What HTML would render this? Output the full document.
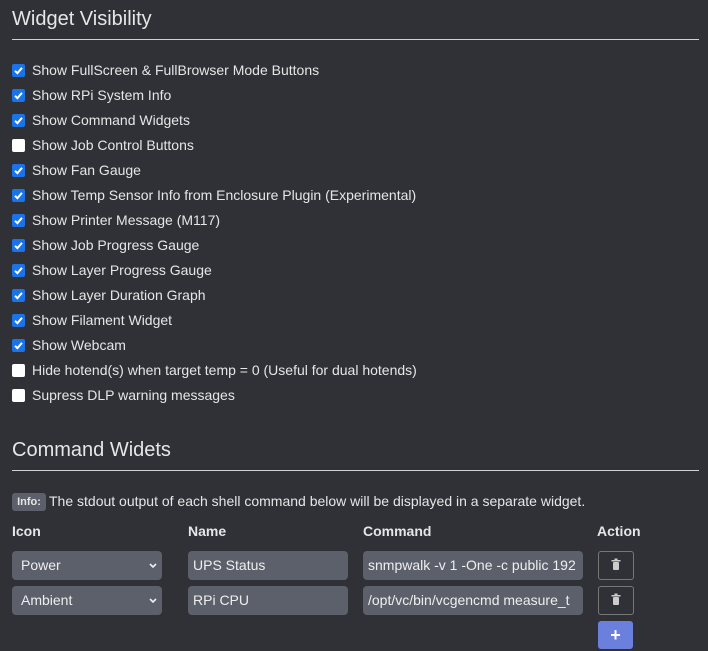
<!DOCTYPE html>
<html><head><style>
body{margin:0;background:#2f3136;color:#e6e6e6;font-family:"Liberation Sans",sans-serif;width:708px;height:651px;overflow:hidden;position:relative}
.a{position:absolute}
h2{position:absolute;margin:0;font-weight:normal;font-size:20px;left:12px;color:#e6e6e6}
.rule{position:absolute;left:12px;width:687px;height:1px;background:#d0d0d0}
.cb{position:absolute;left:12px;width:13px;height:13px;border-radius:2px}
.on{background:#1a73e8}
.off{background:#fff}
.lb{position:absolute;left:32px;font-size:14px;line-height:16px}
.in{position:absolute;height:29px;background:#5b606b;border-radius:4px;font-size:14px;line-height:29px;padding-left:9px;box-sizing:border-box;overflow:hidden;white-space:nowrap;color:#eee}
.th{position:absolute;top:523px;font-size:14px;font-weight:bold}
.btn{position:absolute;left:598px;width:36px;height:29px;border:1px solid #777;border-radius:3px;box-sizing:border-box}
.chev{position:absolute;right:4px;top:11px}
</style></head><body>
<svg width="0" height="0" style="position:absolute"><defs><symbol id="ck" viewBox="0 0 13 13"><path d="M3 6.8 L5.4 9.2 L10 3.8" stroke="#fff" stroke-width="2" fill="none"/></symbol></defs></svg>
<h2 style="top:8px">Widget Visibility</h2>
<div class="rule" style="top:39px"></div>
<svg class="cb on" style="top:64px"><use href="#ck"/></svg><div class="lb" style="top:62px">Show FullScreen &amp; FullBrowser Mode Buttons</div>
<svg class="cb on" style="top:89px"><use href="#ck"/></svg><div class="lb" style="top:87px">Show RPi System Info</div>
<svg class="cb on" style="top:114px"><use href="#ck"/></svg><div class="lb" style="top:112px">Show Command Widgets</div>
<div class="cb off" style="top:139px"></div><div class="lb" style="top:137px">Show Job Control Buttons</div>
<svg class="cb on" style="top:164px"><use href="#ck"/></svg><div class="lb" style="top:162px">Show Fan Gauge</div>
<svg class="cb on" style="top:189px"><use href="#ck"/></svg><div class="lb" style="top:187px">Show Temp Sensor Info from Enclosure Plugin (Experimental)</div>
<svg class="cb on" style="top:214px"><use href="#ck"/></svg><div class="lb" style="top:212px">Show Printer Message (M117)</div>
<svg class="cb on" style="top:239px"><use href="#ck"/></svg><div class="lb" style="top:237px">Show Job Progress Gauge</div>
<svg class="cb on" style="top:264px"><use href="#ck"/></svg><div class="lb" style="top:262px">Show Layer Progress Gauge</div>
<svg class="cb on" style="top:289px"><use href="#ck"/></svg><div class="lb" style="top:287px">Show Layer Duration Graph</div>
<svg class="cb on" style="top:314px"><use href="#ck"/></svg><div class="lb" style="top:312px">Show Filament Widget</div>
<svg class="cb on" style="top:339px"><use href="#ck"/></svg><div class="lb" style="top:337px">Show Webcam</div>
<div class="cb off" style="top:364px"></div><div class="lb" style="top:362px">Hide hotend(s) when target temp = 0 (Useful for dual hotends)</div>
<div class="cb off" style="top:389px"></div><div class="lb" style="top:387px">Supress DLP warning messages</div>
<h2 style="top:439px">Command Widets</h2>
<div class="rule" style="top:470px"></div>
<div class="a" style="left:12px;top:493px;width:34px;height:18px;background:#5b606b;border-radius:3px;font-size:11px;font-weight:bold;line-height:18px;text-align:center">Info:</div>
<div class="a" style="left:49px;top:493px;font-size:14px;line-height:16px">The stdout output of each shell command below will be displayed in a separate widget.</div>
<div class="th" style="left:12px">Icon</div><div class="th" style="left:188px">Name</div><div class="th" style="left:363px">Command</div><div class="th" style="left:597px">Action</div>
<div class="in" style="left:12px;top:551px;width:150px">Power<svg class="chev" width="10" height="8"><path d="M2 2 L5 5 L8 2" stroke="#eee" stroke-width="1.6" fill="none"/></svg></div>
<div class="in" style="left:188px;top:551px;width:160px;padding-left:5px">UPS Status</div>
<div class="in" style="left:363px;top:551px;width:220px;padding-left:5px">snmpwalk -v 1 -One -c public 192</div>
<div class="btn" style="top:551px"><svg width="34" height="27"><rect x="14" y="10" width="6" height="8" rx="1" fill="#ccc"/><rect x="12.5" y="8" width="9" height="1.5" fill="#ccc"/><rect x="15.5" y="6.5" width="3" height="1.5" fill="#ccc"/></svg></div>
<div class="in" style="left:12px;top:586px;width:150px">Ambient<svg class="chev" width="10" height="8"><path d="M2 2 L5 5 L8 2" stroke="#eee" stroke-width="1.6" fill="none"/></svg></div>
<div class="in" style="left:188px;top:586px;width:160px;padding-left:5px">RPi CPU</div>
<div class="in" style="left:363px;top:586px;width:220px;padding-left:5px">/opt/vc/bin/vcgencmd measure_t</div>
<div class="btn" style="top:586px"><svg width="34" height="27"><rect x="14" y="10" width="6" height="8" rx="1" fill="#ccc"/><rect x="12.5" y="8" width="9" height="1.5" fill="#ccc"/><rect x="15.5" y="6.5" width="3" height="1.5" fill="#ccc"/></svg></div>
<div class="a" style="left:598px;top:621px;width:35px;height:28px;background:#6a80dc;border-radius:3px;color:#fff;font-weight:bold;font-size:18px;line-height:28px;text-align:center">+</div>
</body></html>
